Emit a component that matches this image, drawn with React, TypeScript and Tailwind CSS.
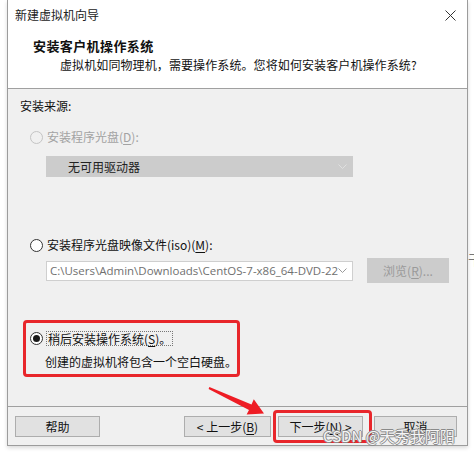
import type { ReactNode } from 'react';

function Radio({ state }: { state: 'disabled' | 'off' | 'on' }) {
  const ring =
    state === 'disabled' ? 'border-[#c4c4c4] bg-[#f0f0f0]' : 'border-[#333333] bg-white';
  return (
    <span className={`flex h-[13px] w-[13px] shrink-0 items-center justify-center rounded-full border ${ring}`}>
      {state === 'on' && <span className="h-[7px] w-[7px] rounded-full bg-[#1a1a1a]" />}
    </span>
  );
}

function Chevron({ color }: { color: string }) {
  return (
    <svg width="9" height="5" viewBox="0 0 9 5" className="shrink-0">
      <path d="M0.5 0.5 L4.5 4.5 L8.5 0.5" fill="none" stroke={color} strokeWidth="1" />
    </svg>
  );
}

function Btn({ children, className = '' }: { children: ReactNode; className?: string }) {
  return (
    <div
      className={`flex h-[21px] items-center justify-center border border-[#adadad] bg-[#e1e1e1] text-[12px] leading-none ${className}`}
    >
      {children}
    </div>
  );
}

export default function App() {
  return (
    <div className="relative h-[452px] w-[474px] overflow-hidden bg-white font-['Noto_Sans_CJK_SC',sans-serif] text-[12px] text-[#111]">
      <div className="ml-[7px] flex h-[446px] w-[461px] flex-col border-x border-b border-[#9c9c9c] shadow-[0_2px_4px_rgba(0,0,0,0.15)]">
        {/* title bar */}
        <div className="flex h-[30px] shrink-0 items-center justify-between bg-white pl-[7px] pr-[11px]">
          <span className="leading-none text-[#222]">新建虚拟机向导</span>
          <svg width="11" height="11" viewBox="0 0 11 11">
            <path d="M0.5 0.5 L10.5 10.5 M10.5 0.5 L0.5 10.5" stroke="#333" strokeWidth="1" />
          </svg>
        </div>

        {/* header */}
        <div className="flex h-[59px] shrink-0 flex-col border-b border-[#a0a0a0] bg-white pt-[8px]">
          <div className="h-[16px] pl-[25px] text-[13px] font-bold leading-[16px] tracking-[0.4px]">安装客户机操作系统</div>
          <div className="mt-[3px] h-[16px] pl-[52px] leading-[16px] tracking-[0.1px]">
            虚拟机如同物理机，需要操作系统。您将如何安装客户机操作系统?
          </div>
        </div>

        {/* body */}
        <div className="flex h-[317px] shrink-0 flex-col bg-[#f0f0f0]">
          <div className="mt-[9px] h-[16px] pl-[12px] leading-[16px]">安装来源:</div>

          <div className="mt-[15px] flex h-[16px] items-center gap-[4px] pl-[22px] text-[#a3a3a3]">
            <Radio state="disabled" />
            <span className="leading-[16px]">
              安装程序光盘(<span className="underline underline-offset-2">D</span>):
            </span>
          </div>

          <div className="ml-[38px] mt-[11px] flex h-[21px] w-[307px] items-center justify-between bg-[#cccccc] pl-[22px] pr-[6px]">
            <span className="leading-none text-[#222]">无可用驱动器</span>
            <Chevron color="#e0e0e0" />
          </div>

          <div className="mt-[60px] flex h-[16px] items-center gap-[4px] pl-[22px]">
            <Radio state="off" />
            <span className="leading-[16px]">
              安装程序光盘映像文件(iso)(<span className="underline underline-offset-2">M</span>):
            </span>
          </div>

          <div className="mt-[5px] flex h-[25px] items-center pl-[38px]">
            <div className="flex h-[20px] w-[307px] items-center justify-between border border-[#cfcfcf] bg-white pl-[3px] pr-[5px]">
              <span className="min-w-0 overflow-hidden whitespace-nowrap font-['Open_Sans',sans-serif] text-[11.5px] leading-[16px] text-[#707070]">
                C:\Users\Admin\Downloads\CentOS-7-x86_64-DVD-22
              </span>
              <Chevron color="#9a9a9a" />
            </div>
            <div className="ml-[14px] flex h-[25px] w-[82px] items-center justify-center bg-[#cccccc] leading-none text-[#9a9a9a]">
              浏览(<span className="underline underline-offset-2">R</span>)...
            </div>
          </div>

          <div className="ml-[15px] mt-[37px] flex h-[57px] w-[217px] flex-col rounded-[4px] border-[3px] border-[#e8262b] pt-[7px]">
            <div className="flex h-[16px] items-center gap-[3px] pl-[4px]">
              <Radio state="on" />
              <span className="border border-dotted border-[#777] px-[1px] leading-[13px]">
                稍后安装操作系统(<span className="underline underline-offset-2">S</span>)。
              </span>
            </div>
            <div className="mt-[8px] h-[16px] pl-[19px] leading-[16px]">创建的虚拟机将包含一个空白硬盘。</div>
          </div>
        </div>

        {/* footer */}
        <div className="flex h-[39px] shrink-0 items-start border-t border-[#a0a0a0] bg-[#f0f0f0] pl-[7px] pt-[9px]">
          <Btn className="w-[85px]">帮助</Btn>
          <Btn className="ml-[84px] w-[87px]">
            &lt; 上一步(<span className="underline underline-offset-2">B</span>)
          </Btn>
          <div className="relative ml-[7px]">
            <Btn className="w-[85px] border-[#0078d7]">
              下一步(<span className="underline underline-offset-2">N</span>) &gt;
            </Btn>
            <div className="absolute -bottom-[6px] -left-[5px] -right-[9px] -top-[6px] rounded-[4px] border-[3px] border-[#e8262b]" />
          </div>
          <Btn className="ml-[11px] w-[83px]">取消</Btn>
        </div>
      </div>

      {/* annotation arrow */}
      <svg className="absolute left-[200px] top-[380px]" width="70" height="40" viewBox="0 0 70 40">
        <polygon
          points="9.4,7.1 51.5,24.5 53.8,19.2 64,33.5 46.6,34.6 49,29.9 8.6,8.9"
          fill="#ee1c24"
        />
      </svg>

      {/* watermark */}
      <div className="absolute left-[323px] top-[428px] whitespace-nowrap text-[15px] leading-none text-[#f5f5f5] [text-shadow:1px_0_0_#8a8a8a,-1px_0_0_#8a8a8a,0_1px_0_#8a8a8a,0_-1px_0_#8a8a8a]">
        CSDN @天秀我阿阳
      </div>

      {/* window behind, peeking out */}
      <div className="absolute left-[468px] top-[252px] text-[14px] leading-none text-[#777]">干</div>
    </div>
  );
}
